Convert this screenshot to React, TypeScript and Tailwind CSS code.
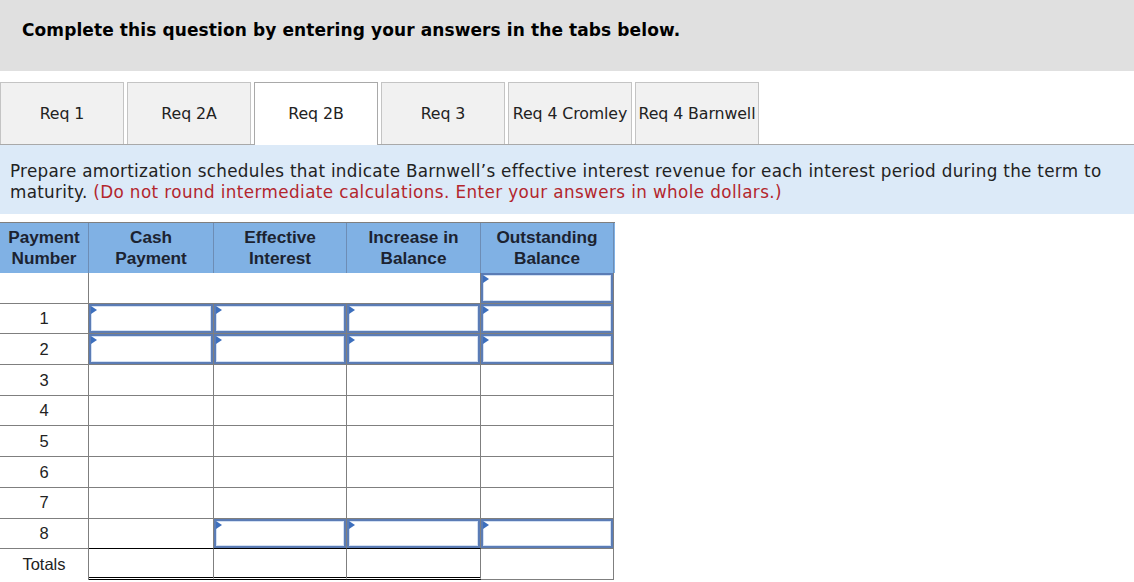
import React from 'react';

const tabs = ['Req 1', 'Req 2A', 'Req 2B', 'Req 3', 'Req 4 Cromley', 'Req 4 Barnwell'];
const activeTab = 'Req 2B';

const cols = 'grid grid-cols-[89px_125px_133px_134px_133px]';

// cell types: 'n' = number/label, 'b' = blank, 'i' = input
type Cell = { kind: 'n' | 'b' | 'i'; text?: string; span?: number; total?: boolean };

function InputBox() {
  return (
    <div className="relative h-full w-full border-2 border-[#5b7cb5] bg-white shadow-[inset_0_0_0_1px_#d3e0f3]">
      <svg className="absolute left-0 top-0" width="7" height="9" viewBox="0 0 7 9">
        <polygon points="0,0 6,4 0,8" fill="#3d6fbd" />
      </svg>
    </div>
  );
}

function Row({ cells, last }: { cells: Cell[]; last?: boolean }) {
  return (
    <div className={`${cols} h-[30.7px]`}>
      {cells.map((c, i) => {
        const span = c.span === 3 ? 'col-span-3' : '';
        if (c.kind === 'n') {
          return (
            <div
              key={i}
              className={`flex items-center justify-center border-r border-[#7f7f7f] text-[16.5px] text-[#222] ${last ? '' : 'border-b'}`}
            >
              {c.text}
            </div>
          );
        }
        if (c.kind === 'i') {
          return (
            <div key={i} className="border-r border-b border-[#7f7f7f] p-0">
              <InputBox />
            </div>
          );
        }
        if (c.total) {
          return (
            <div key={i} className={`${span} border-r border-[#7f7f7f] border-t border-t-black border-b-[3px] border-b-black border-double -mt-px`} />
          );
        }
        return <div key={i} className={`${span} border-r border-b border-[#7f7f7f]`} />;
      })}
    </div>
  );
}

export default function App() {
  const blankRow = (n: string): Cell[] => [
    { kind: 'n', text: n },
    { kind: 'b' },
    { kind: 'b' },
    { kind: 'b' },
    { kind: 'b' },
  ];
  const inputRow = (n: string): Cell[] => [
    { kind: 'n', text: n },
    { kind: 'i' },
    { kind: 'i' },
    { kind: 'i' },
    { kind: 'i' },
  ];

  return (
    <div className="w-[1134px] h-[582px] overflow-hidden bg-white font-['DejaVu_Sans',Verdana,sans-serif]">
      <div className="h-[71px] bg-[#e0e0e0] pl-[22px] pt-[18px]">
        <span className="text-[17px] font-bold tracking-[0.1px] text-black">
          Complete this question by entering your answers in the tabs below.
        </span>
      </div>

      <div className="mt-[11px] flex gap-[3px] border-b border-[#a9a9a9] h-[63px]">
        {tabs.map((t) => {
          const active = t === activeTab;
          return (
            <div
              key={t}
              className={`flex w-[124px] items-center justify-center whitespace-nowrap border border-b-0 text-[15.8px] tracking-[-0.1px] text-[#222] ${
                active ? 'bg-white -mb-px border-[#a9a9a9]' : 'bg-[#f1f1f1] border-[#c4c4c4]'
              }`}
            >
              {t}
            </div>
          );
        })}
      </div>

      <div className="h-[69px] bg-[#dceaf8] pl-[10px] pt-[16px] text-[16.8px] tracking-[0.3px] leading-[21px] text-[#222]">
        Prepare amortization schedules that indicate Barnwell’s effective interest revenue for each interest period during the term to
        <br />
        maturity. <span className="text-[#b3262d] tracking-[0.4px]">(Do not round intermediate calculations. Enter your answers in whole dollars.)</span>
      </div>

      <div className="mt-[8px] w-[615px] border-t border-[#7f7f7f] font-['Liberation_Sans',Arial,sans-serif]">
        <div className={`${cols} h-[50px] bg-[#80b1e4] text-[17.2px] font-bold leading-[21px] text-[#1c2331]`}>
          {[
            ['Payment', 'Number'],
            ['Cash', 'Payment'],
            ['Effective', 'Interest'],
            ['Increase in', 'Balance'],
            ['Outstanding', 'Balance'],
          ].map(([a, b]) => (
            <div key={a} className="flex flex-col items-center justify-center border-r border-[#6d8db5] text-center">
              <span>{a}</span>
              <span>{b}</span>
            </div>
          ))}
        </div>

        <Row cells={[{ kind: 'n', text: '' }, { kind: 'b', span: 3 }, { kind: 'i' }]} />
        <Row cells={inputRow('1')} />
        <Row cells={inputRow('2')} />
        {['3', '4', '5', '6', '7'].map((n) => (
          <Row key={n} cells={blankRow(n)} />
        ))}
        <Row cells={[{ kind: 'n', text: '8' }, { kind: 'b' }, { kind: 'i' }, { kind: 'i' }, { kind: 'i' }]} />
        <Row
          last
          cells={[
            { kind: 'n', text: 'Totals' },
            { kind: 'b', total: true },
            { kind: 'b', total: true },
            { kind: 'b', total: true },
            { kind: 'b' },
          ]}
        />
      </div>
    </div>
  );
}
